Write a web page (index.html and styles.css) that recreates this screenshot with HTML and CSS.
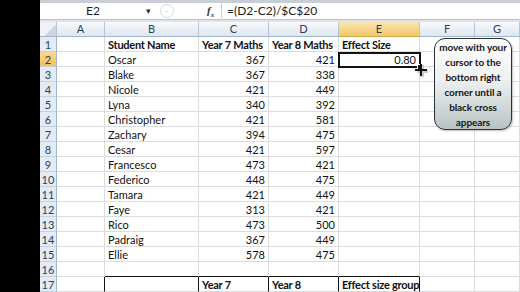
FILE: index.html
```html
<!DOCTYPE html>
<html lang="en">
<head>
  <meta charset="UTF-8">
  <title>Effect Size</title>
  <link rel="stylesheet" href="styles.css">
</head>
<body>

<div class="screen">
  <div class="blackbar"></div>
  <div class="app">
    <div class="topstrip"></div>
    <div class="formulabar">
      <div class="namebox">E2</div>
      <div class="drop">&#9662;</div>
      <div class="circle">-</div>
      <div class="fx">f<sub>x</sub></div>
      <div class="formula">=(D2-C2)/$C$20</div>
    </div>
    <div class="gap"></div>
    <div class="grid" id="grid"></div>
  </div>

  <div class="selection"><span class="handle"></span></div>
  <div class="cursor">
    <svg width="14" height="14" viewBox="0 0 14 14">
      <path d="M6 1h3v5h4v3H9v4H6V9H2V6h4z" fill="#999" opacity="0.5"/>
      <path d="M5 0h2v5h5v2H7v5H5V7H0V5h5z" fill="#111"/>
    </svg>
  </div>
  <div class="tip">move with your<br>cursor to the<br>bottom right<br>corner until a<br>black cross<br>appears</div>
</div>

<script>
  const rows = [
    ['Student Name', 'Year 7 Maths', 'Year 8 Maths', 'Effect Size'],
    ['Oscar', 367, 421, '0.80'],
    ['Blake', 367, 338],
    ['Nicole', 421, 449],
    ['Lyna', 340, 392],
    ['Christopher', 421, 581],
    ['Zachary', 394, 475],
    ['Cesar', 421, 597],
    ['Francesco', 473, 421],
    ['Federico', 448, 475],
    ['Tamara', 421, 449],
    ['Faye', 313, 421],
    ['Rico', 473, 500],
    ['Padraig', 367, 449],
    ['Ellie', 578, 475],
    [],
    ['', 'Year 7', 'Year 8', 'Effect size group']
  ];
  const cols = ['', 'A', 'B', 'C', 'D', 'E', 'F', 'G'];
  const grid = document.getElementById('grid');

  function cell(cls, text) {
    const d = document.createElement('div');
    d.className = cls;
    d.textContent = text === undefined ? '' : text;
    grid.appendChild(d);
    return d;
  }

  cols.forEach((c, i) => {
    let cls = 'colhead';
    if (i === 0) cls += ' corner';
    if (c === 'E') cls += ' active';
    cell(cls, c);
  });

  rows.forEach((r, i) => {
    const n = i + 1;
    cell('rowhead' + (n === 2 ? ' active' : ''), n);
    const a = cell('c', '');
    if (n === 17) a.classList.add('boxright');
    for (let j = 0; j < 6; j++) {
      const v = r[j];
      let cls = 'c';
      if (j > 0 && j < 3 && n > 1 && n < 17) cls += ' num';
      if (j === 3 && n === 2) cls += ' num';
      if (n === 1 || n === 17) cls += ' bold';
      if (n === 16 && j < 4) cls += ' boxbottom';
      if (n === 17 && j < 4) cls += ' boxright';
      cell(cls, v);
    }
  });
</script>

</body>
</html>
```

FILE: styles.css
```css
body {
  margin: 0;
  background: #000;
  font-family: Lato, "Liberation Sans", sans-serif;
}

.screen {
  position: relative;
  width: 520px;
  height: 292px;
  display: flex;
  overflow: hidden;
  background: #fff;
}

.blackbar {
  width: 40px;
  flex: none;
  background: #000;
}

.app {
  flex: 1;
  display: flex;
  flex-direction: column;
  background: #fff;
}

.topstrip {
  height: 3px;
  background: #c9ced6;
}

.formulabar {
  height: 17px;
  display: flex;
  align-items: center;
  background: #fff;
  border-bottom: 1px solid #b9c3d0;
  font-size: 12px;
  color: #222;
}

.namebox {
  width: 106px;
  text-align: center;
}

.drop {
  width: 14px;
  font-size: 9px;
  color: #333;
}

.circle {
  width: 12px;
  height: 12px;
  border: 1px solid #d6dbe2;
  border-radius: 50%;
  color: #c8ced6;
  font-size: 9px;
  line-height: 11px;
  text-align: center;
  margin-right: 33px;
}

.fx {
  width: 14px;
  font-family: "Liberation Serif", serif;
  font-style: italic;
  font-weight: bold;
  font-size: 11px;
  color: #333;
  border-right: 1px solid #c8ced6;
  height: 15px;
  line-height: 14px;
  margin-right: 5px;
}

.fx sub {
  font-size: 7px;
}

.formula {
  font-size: 12px;
}

.gap {
  height: 2px;
  background: #dfe4ec;
}

.grid {
  display: grid;
  grid-template-columns: 17px 48px 94px 70px 70px 81px 55px 45px;
  grid-auto-rows: 15px;
  font-size: 11px;
  color: #111;
}

.grid > div {
  box-sizing: border-box;
  border-right: 1px solid #dadcdd;
  border-bottom: 1px solid #dadcdd;
  line-height: 15px;
  padding: 0 3px;
  white-space: nowrap;
  overflow: hidden;
}

.grid > .colhead {
  text-align: center;
  color: #2a3f5a;
  background: linear-gradient(#f8fafc, #dfe6ef);
  border-right: 1px solid #b5c4d6;
  border-bottom: 1px solid #9eb6ce;
  line-height: 14px;
}

.grid > .corner {
  background: linear-gradient(135deg, #eef2f7 60%, #cdd5df 60%);
}

.grid > .colhead.active {
  background: linear-gradient(#fbe5b2, #f2c866);
  border-bottom-color: #d3a84b;
}

.grid > .rowhead {
  text-align: center;
  padding: 0;
  color: #2a3f5a;
  background: #e4ebf5;
  border-right: 1px solid #9eb6ce;
  border-bottom: 1px solid #c5d1de;
}

.grid > .rowhead.active {
  background: linear-gradient(#f9d98c, #f1c15b);
}

.grid > .num {
  text-align: right;
}

.grid > .bold {
  font-weight: bold;
  letter-spacing: -0.25px;
}

.grid > .boxbottom {
  border-bottom-color: #111;
}

.grid > .boxright {
  border-right-color: #111;
}

.selection {
  position: absolute;
  left: 338px;
  top: 52px;
  width: 83px;
  height: 16px;
  box-sizing: border-box;
  border: 2px solid #111;
}

.handle {
  position: absolute;
  right: -4px;
  bottom: -4px;
  width: 4px;
  height: 4px;
  background: #111;
  border: 1px solid #fff;
}

.cursor {
  position: absolute;
  left: 415px;
  top: 62px;
  width: 14px;
  height: 14px;
}

.tip {
  position: absolute;
  left: 434px;
  top: 38px;
  width: 78px;
  height: 92px;
  box-sizing: border-box;
  padding: 1px 0 0;
  border: 1.5px solid #2c3035;
  border-radius: 11px;
  background: linear-gradient(#ffffff 0%, #eef1f1 45%, #b9c3c3 100%);
  box-shadow: 1px 1px 2px rgba(0,0,0,0.25);
  font-family: Lato, "Liberation Sans", sans-serif;
  font-weight: bold;
  font-size: 10px;
  letter-spacing: -0.1px;
  line-height: 15px;
  text-align: center;
  white-space: nowrap;
  color: #151515;
}
```
